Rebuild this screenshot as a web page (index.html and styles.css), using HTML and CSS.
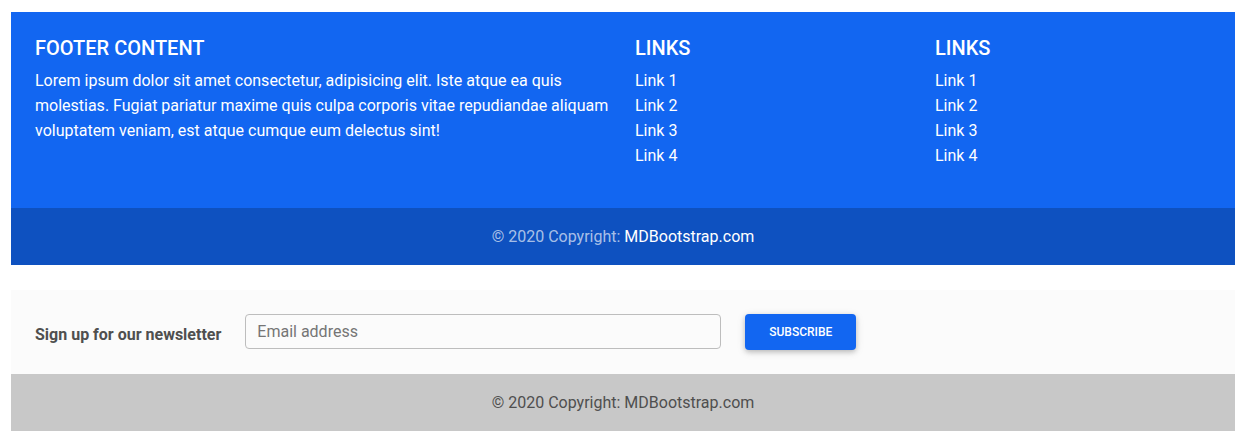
FILE: index.html
```html
<html>
    <head>
        <title>
            Footers
        </title>
        <link rel="stylesheet" href="styles.css">
    </head>
    <body>
        <!-- footer azul com conteudo e links -->
        <footer class="footer-blue">
            <div class="footer-main">
                <div class="col">
                    <h5>Footer content</h5>
                    <p>Lorem ipsum dolor sit amet consectetur, adipisicing elit. Iste atque ea quis molestias. Fugiat pariatur maxime quis culpa corporis vitae repudiandae aliquam voluptatem veniam, est atque cumque eum delectus sint!</p>
                </div>
                <div class="col">
                    <h5>Links</h5>
                    <ul>
                        <li><a href="#!">Link 1</a></li>
                        <li><a href="#!">Link 2</a></li>
                        <li><a href="#!">Link 3</a></li>
                        <li><a href="#!">Link 4</a></li>
                    </ul>
                </div>
                <div class="col">
                    <h5>Links</h5>
                    <ul>
                        <li><a href="#!">Link 1</a></li>
                        <li><a href="#!">Link 2</a></li>
                        <li><a href="#!">Link 3</a></li>
                        <li><a href="#!">Link 4</a></li>
                    </ul>
                </div>
            </div>
            <div class="copyright">
                &copy; 2020 Copyright: <a href="#!">MDBootstrap.com</a>
            </div>
        </footer>

        <!-- footer claro com newsletter -->
        <footer class="footer-light">
            <form class="newsletter" action="">
                <strong class="news-label">Sign up for our newsletter</strong>
                <input type="email" class="email" placeholder="Email address" />
                <button type="button" class="btn-subscribe">Subscribe</button>
            </form>
            <div class="copyright">
                &copy; 2020 Copyright: <a href="#!">MDBootstrap.com</a>
            </div>
        </footer>
    </body>
</html>
```

FILE: styles.css
```css
body{
    margin: 12px 8px 0 11px;
    font-family: Roboto, "Liberation Sans", sans-serif;
    font-size: 16px;
    line-height: 25px;
    background-color: #fff;
}
a{
    text-decoration: none;
}
.footer-blue{
    background-color: #1266f1;
    color: #fff;
}
.footer-main{
    display: grid;
    grid-template-columns: 600px 300px 1fr;
    padding: 24px 0 24px 24px;
}
.col{
    padding-right: 24px;
}
h5{
    margin: 0 0 8px 0;
    font-size: 20px;
    font-weight: 500;
    line-height: 24px;
    text-transform: uppercase;
}
.footer-main p{
    margin: 0 0 16px 0;
}
.footer-main ul{
    list-style: none;
    margin: 0 0 16px 0;
    padding: 0;
}
.footer-main a{
    color: #fff;
}
.copyright{
    background-color: rgba(0, 0, 0, 0.2);
    text-align: center;
    padding: 16px;
    line-height: 25px;
}
.footer-blue .copyright{
    color: rgba(255, 255, 255, 0.65);
}
.footer-blue .copyright a{
    color: #fff;
}
.footer-light{
    margin-top: 25px;
    background-color: #fbfbfb;
    color: #4f4f4f;
}
.footer-light .copyright a{
    color: #4f4f4f;
}
.newsletter{
    display: flex;
    align-items: flex-start;
    margin: 0;
    padding: 24px;
    height: 36px;
}
.news-label{
    font-weight: 700;
    margin-top: 8px;
    margin-right: 24px;
}
.email{
    width: 476px;
    height: 35px;
    box-sizing: border-box;
    border: 1px solid #bdbdbd;
    border-radius: 4px;
    background: transparent;
    padding: 0 11px;
    font-family: Roboto, "Liberation Sans", sans-serif;
    font-size: 16px;
    color: #4f4f4f;
}
.email::placeholder{
    color: #757575;
}
.btn-subscribe{
    margin-left: 24px;
    width: 111px;
    height: 36px;
    border: none;
    border-radius: 4px;
    background-color: #1266f1;
    color: #fff;
    font-family: Roboto, "Liberation Sans", sans-serif;
    font-size: 12px;
    font-weight: 500;
    text-transform: uppercase;
    box-shadow: 0 2px 5px 0 rgba(0, 0, 0, 0.2), 0 2px 10px 0 rgba(0, 0, 0, 0.1);
}
```
